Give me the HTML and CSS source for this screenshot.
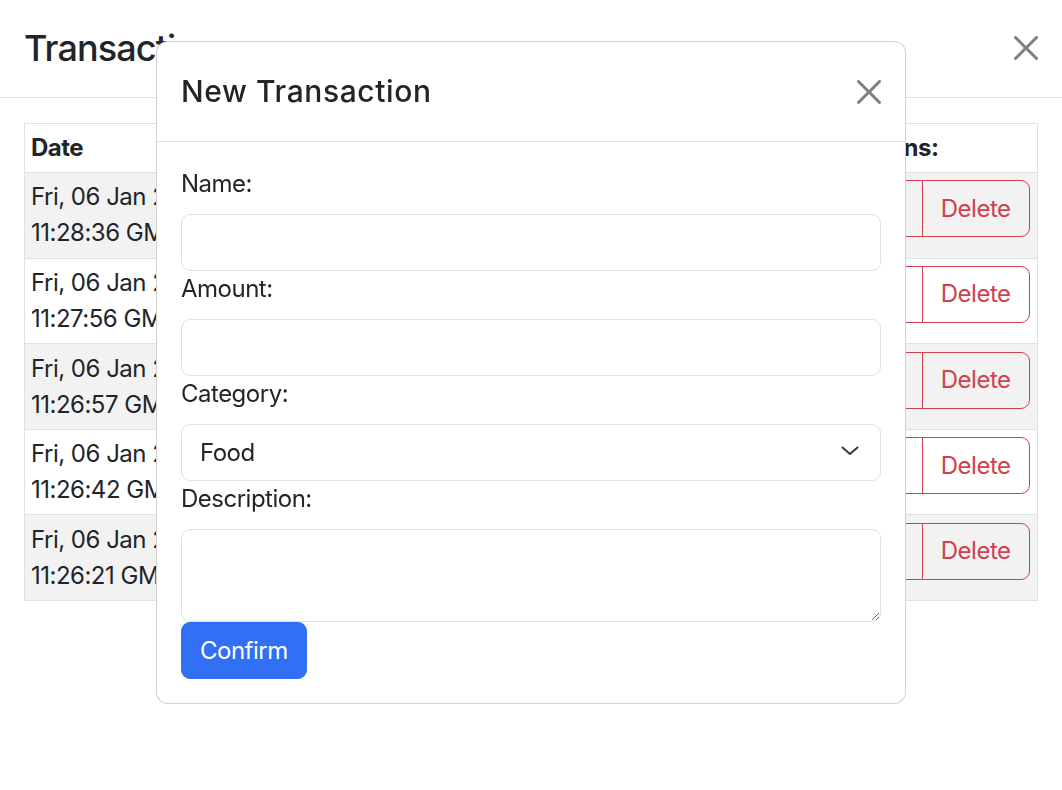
FILE: index.html
```html
<!DOCTYPE html>
<html lang="en">
<head>
<meta charset="utf-8">
<title>Transactions</title>
<link rel="stylesheet" href="styles.css">
</head>
<body>
<div class="page">
  <header class="page-header">
    <h4 class="page-title">Transactions</h4>
    <button class="btn-close" aria-label="Close">
      <svg viewBox="0 0 16 16" width="24" height="24"><path d="M.293.293a1 1 0 0 1 1.414 0L8 6.586 14.293.293a1 1 0 1 1 1.414 1.414L9.414 8l6.293 6.293a1 1 0 0 1-1.414 1.414L8 9.414l-6.293 6.293a1 1 0 0 1-1.414-1.414L6.586 8 .293 1.707a1 1 0 0 1 0-1.414z"/></svg>
    </button>
  </header>
  <div class="page-body">
    <table class="tx-table">
      <colgroup>
        <col class="c-date"><col class="c-name"><col class="c-amount"><col class="c-cat"><col class="c-desc"><col class="c-actions">
      </colgroup>
      <thead>
        <tr><th>Date</th><th>Name</th><th>Amount</th><th>Category</th><th>Description</th><th>Actions:</th></tr>
      </thead>
      <tbody>
        <tr class="odd"><td>Fri, 06 Jan 2023 11:28:36 GMT</td><td>Lunch</td><td>12.5</td><td>Food</td><td>Sandwich</td><td><div class="btn-group"><button class="btn btn-outline-danger">Edit</button><button class="btn btn-outline-danger">Delete</button></div></td></tr>
        <tr><td>Fri, 06 Jan 2023 11:27:56 GMT</td><td>Bus</td><td>2.8</td><td>Transport</td><td>Ticket</td><td><div class="btn-group"><button class="btn btn-outline-danger">Edit</button><button class="btn btn-outline-danger">Delete</button></div></td></tr>
        <tr class="odd"><td>Fri, 06 Jan 2023 11:26:57 GMT</td><td>Coffee</td><td>3.2</td><td>Food</td><td>Latte</td><td><div class="btn-group"><button class="btn btn-outline-danger">Edit</button><button class="btn btn-outline-danger">Delete</button></div></td></tr>
        <tr><td>Fri, 06 Jan 2023 11:26:42 GMT</td><td>Book</td><td>18</td><td>Other</td><td>Novel</td><td><div class="btn-group"><button class="btn btn-outline-danger">Edit</button><button class="btn btn-outline-danger">Delete</button></div></td></tr>
        <tr class="odd"><td>Fri, 06 Jan 2023 11:26:21 GMT</td><td>Dinner</td><td>24</td><td>Food</td><td>Pizza</td><td><div class="btn-group"><button class="btn btn-outline-danger">Edit</button><button class="btn btn-outline-danger">Delete</button></div></td></tr>
      </tbody>
    </table>
  </div>
</div>

<div class="modal">
  <div class="modal-dialog">
    <div class="modal-content">
      <div class="modal-header">
        <h5 class="modal-title">New Transaction</h5>
        <button class="btn-close" aria-label="Close">
          <svg viewBox="0 0 16 16" width="24" height="24"><path d="M.293.293a1 1 0 0 1 1.414 0L8 6.586 14.293.293a1 1 0 1 1 1.414 1.414L9.414 8l6.293 6.293a1 1 0 0 1-1.414 1.414L8 9.414l-6.293 6.293a1 1 0 0 1-1.414-1.414L6.586 8 .293 1.707a1 1 0 0 1 0-1.414z"/></svg>
        </button>
      </div>
      <form class="modal-body">
        <label class="form-label" for="name">Name:</label>
        <input class="form-control" id="name" type="text">
        <label class="form-label" for="amount">Amount:</label>
        <input class="form-control" id="amount" type="text">
        <label class="form-label" for="cat">Category:</label>
        <div class="select-wrap">
          <select class="form-control form-select" id="cat">
            <option>Food</option>
            <option>Transport</option>
            <option>Other</option>
          </select>
          <svg class="chevron" viewBox="0 0 18 10" width="18" height="10"><polyline points="1.5,1.5 9,8 16.5,1.5" fill="none" stroke="#343a40" stroke-linecap="round" stroke-linejoin="round" stroke-width="2"/></svg>
        </div>
        <label class="form-label" for="desc">Description:</label>
        <textarea class="form-control form-textarea" id="desc" rows="2"></textarea>
        <button type="button" class="btn btn-primary">Confirm</button>
      </form>
    </div>
  </div>
</div>
</body>
</html>
```

FILE: styles.css
```css
* { box-sizing: border-box; }

body {
  margin: 0;
  font-family: Inter, "Liberation Sans", sans-serif;
  font-size: 24px;
  line-height: 1.5;
  letter-spacing: -0.5px;
  color: #212529;
  background: #fff;
}

button, input, select, textarea {
  font-family: inherit;
  font-size: 24px;
  line-height: 36px;
  letter-spacing: inherit;
  color: inherit;
}

.page-header {
  display: flex;
  align-items: center;
  justify-content: space-between;
  height: 97.5px;
  padding: 0 24px;
  border-bottom: 1.5px solid #dee2e6;
}

.page-title {
  margin: 0;
  font-size: 36px;
  font-weight: 500;
  line-height: 1.2;
  letter-spacing: -0.9px;
}

.btn-close {
  display: flex;
  padding: 0;
  border: 0;
  background: transparent;
  width: 24px;
  height: 24px;
}
.btn-close svg { fill: #000; opacity: .5; }

.page-body { padding: 25px 24px 24px; }

.tx-table {
  width: 100%;
  table-layout: fixed;
  border-collapse: collapse;
  border: 1.5px solid #dee2e6;
}
.c-date { width: 204px; }
.c-name { width: 150px; }
.c-amount { width: 120px; }
.c-cat { width: 150px; }
.c-desc { width: 190px; }

.tx-table th,
.tx-table td {
  padding: 6.3px 6px;
  text-align: left;
  vertical-align: top;
  border-bottom: 1.5px solid #dee2e6;
}
.tx-table th { font-weight: 700; }
.tx-table tr.odd td { background: #f2f2f2; }

.btn-group { display: inline-flex; margin-top: 1px; }

.btn {
  padding: 9.5px 18px;
  border: 1.5px solid transparent;
  border-radius: 9px;
  background: transparent;
  cursor: pointer;
}
.btn-outline-danger {
  color: #d0414d;
  border-color: #d0414d;
}
.btn-group .btn:first-child { border-top-right-radius: 0; border-bottom-right-radius: 0; }
.btn-group .btn:last-child { border-top-left-radius: 0; border-bottom-left-radius: 0; margin-left: -1.5px; }

.btn-primary {
  background: #3170f5;
  border-color: #3170f5;
  color: #fff;
  display: block;
  height: 57px;
  padding: 0 18px;
}

/* modal overlay */
.modal {
  position: fixed;
  top: 0;
  left: 0;
  right: 0;
  bottom: 0;
}
.modal-dialog {
  width: 750px;
  margin: 41px auto 0;
}
.modal-content {
  background: #fff;
  border: 1.5px solid rgba(0, 0, 0, .175);
  border-radius: 12px;
}
.modal-header {
  display: flex;
  align-items: center;
  justify-content: space-between;
  height: 100px;
  padding: 0 24px;
  border-bottom: 1.5px solid #dee2e6;
}
.modal-title {
  margin: 0;
  font-size: 30px;
  font-weight: 500;
  line-height: 1.5;
  letter-spacing: 0.6px;
}

.modal-body {
  display: flex;
  flex-direction: column;
  align-items: stretch;
  padding: 24px;
  margin: 0;
}
.modal-body .btn-primary { align-self: flex-start; }

.form-label {
  display: block;
  margin-bottom: 12px;
}

.form-control {
  display: block;
  width: 100%;
  height: 57px;
  padding: 9px 18px;
  background: #fff;
  border: 1.5px solid #dee2e6;
  border-radius: 9px;
  outline: none;
}

.select-wrap { position: relative; }
.form-select {
  -webkit-appearance: none;
  appearance: none;
  padding-right: 54px;
}
.chevron {
  position: absolute;
  right: 22px;
  top: 22px;
  pointer-events: none;
}

.form-textarea {
  height: 93px;
  resize: vertical;
}
```
